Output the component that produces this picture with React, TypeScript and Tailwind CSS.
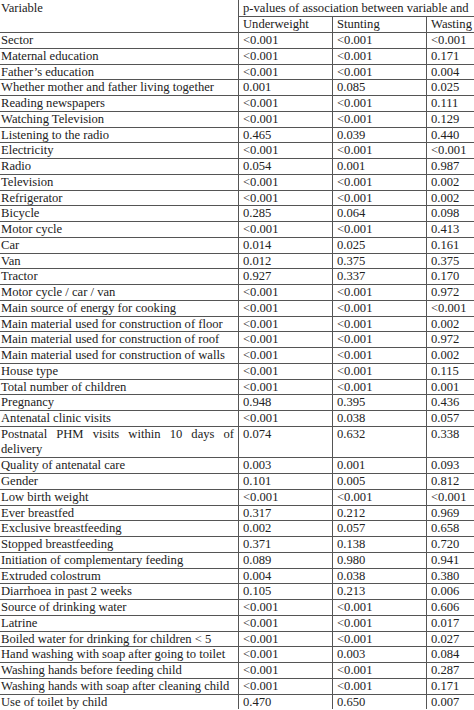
const rows: [string, string, string, string][] = [
  ['Sector', '<0.001', '<0.001', '<0.001'],
  ['Maternal education', '<0.001', '<0.001', '0.171'],
  ['Father’s education', '<0.001', '<0.001', '0.004'],
  ['Whether mother and father living together', '0.001', '0.085', '0.025'],
  ['Reading newspapers', '<0.001', '<0.001', '0.111'],
  ['Watching Television', '<0.001', '<0.001', '0.129'],
  ['Listening to the radio', '0.465', '0.039', '0.440'],
  ['Electricity', '<0.001', '<0.001', '<0.001'],
  ['Radio', '0.054', '0.001', '0.987'],
  ['Television', '<0.001', '<0.001', '0.002'],
  ['Refrigerator', '<0.001', '<0.001', '0.002'],
  ['Bicycle', '0.285', '0.064', '0.098'],
  ['Motor cycle', '<0.001', '<0.001', '0.413'],
  ['Car', '0.014', '0.025', '0.161'],
  ['Van', '0.012', '0.375', '0.375'],
  ['Tractor', '0.927', '0.337', '0.170'],
  ['Motor cycle / car / van', '<0.001', '<0.001', '0.972'],
  ['Main source of energy for cooking', '<0.001', '<0.001', '<0.001'],
  ['Main material used for construction of floor', '<0.001', '<0.001', '0.002'],
  ['Main material used for construction of roof', '<0.001', '<0.001', '0.972'],
  ['Main material used for construction of walls', '<0.001', '<0.001', '0.002'],
  ['House type', '<0.001', '<0.001', '0.115'],
  ['Total number of children', '<0.001', '<0.001', '0.001'],
  ['Pregnancy', '0.948', '0.395', '0.436'],
  ['Antenatal clinic visits', '<0.001', '0.038', '0.057'],
  ['Postnatal PHM visits within 10 days of delivery', '0.074', '0.632', '0.338'],
  ['Quality of antenatal care', '0.003', '0.001', '0.093'],
  ['Gender', '0.101', '0.005', '0.812'],
  ['Low birth weight', '<0.001', '<0.001', '<0.001'],
  ['Ever breastfed', '0.317', '0.212', '0.969'],
  ['Exclusive breastfeeding', '0.002', '0.057', '0.658'],
  ['Stopped breastfeeding', '0.371', '0.138', '0.720'],
  ['Initiation of complementary feeding', '0.089', '0.980', '0.941'],
  ['Extruded colostrum', '0.004', '0.038', '0.380'],
  ['Diarrhoea in past 2 weeks', '0.105', '0.213', '0.006'],
  ['Source of drinking water', '<0.001', '<0.001', '0.606'],
  ['Latrine', '<0.001', '<0.001', '0.017'],
  ['Boiled water for drinking for children < 5', '<0.001', '<0.001', '0.027'],
  ['Hand washing with soap after going to toilet', '<0.001', '0.003', '0.084'],
  ['Washing hands before feeding child', '<0.001', '<0.001', '0.287'],
  ['Washing hands with soap after cleaning child', '<0.001', '<0.001', '0.171'],
  ['Use of toilet by child', '0.470', '0.650', '0.007'],
];

const val = 'w-[94px] shrink-0 border-l border-[#555] pl-[4px] whitespace-nowrap';

export default function App() {
  return (
    <div
      className="w-[474px] h-[710px] overflow-hidden bg-white text-[12.6px] leading-[14.75px] text-[#222]"
      style={{ fontFamily: '"Liberation Serif", "Times New Roman", serif' }}
    >
      <div className="flex w-[520px]">
        <div className="w-[238px] shrink-0 pl-[1px] pt-[1px]">Variable</div>
        <div className="flex flex-col">
          <div className="h-[16px] border-l border-[#555] pl-[4px] pt-[1px] whitespace-nowrap">
            p-values of association between variable and
          </div>
          <div className="flex h-[16px] border-t border-[#555]">
            <div className={val}>Underweight</div>
            <div className={val}>Stunting</div>
            <div className={val}>Wasting</div>
          </div>
        </div>
      </div>
      {rows.map((r) => {
        const tall = r[0].startsWith('Postnatal');
        return (
          <div
            key={r[0]}
            className={`flex w-[520px] border-t border-[#555] ${tall ? 'h-[31.5px]' : 'h-[15.75px]'}`}
          >
            <div className="w-[238px] shrink-0 pl-[1px] pr-[4px] text-justify">{r[0]}</div>
            <div className={val}>{r[1]}</div>
            <div className={val}>{r[2]}</div>
            <div className={val}>{r[3]}</div>
          </div>
        );
      })}
    </div>
  );
}
